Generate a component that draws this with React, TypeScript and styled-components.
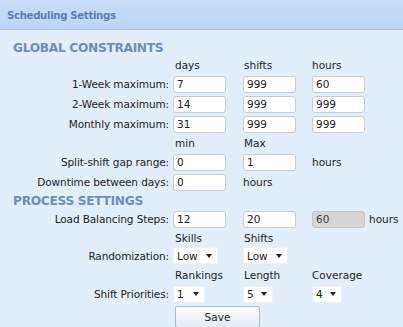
import React from "react";
import styled, { createGlobalStyle } from "styled-components";

const GlobalStyle = createGlobalStyle`
  html, body {
    margin: 0;
    padding: 0;
    background: #e3eefb;
  }
  body {
    font-family: "DejaVu Sans", Verdana, sans-serif;
    font-size: 10.5px;
    color: #222;
  }
`;

const Panel = styled.div`
  width: 403px;
  height: 327px;
  overflow: hidden;
  background: #e3eefb;
`;

const Header = styled.div`
  height: 30px;
  display: flex;
  align-items: center;
  padding-left: 7px;
  padding-top: 1px;
  box-sizing: border-box;
  background: linear-gradient(#c7ddf8, #bdd6f6);
  border-bottom: 1px solid #a9c3e6;
`;

const Title = styled.div`
  font-family: "DejaVu Sans", Verdana, sans-serif;
  font-weight: bold;
  font-size: 10.2px;
  letter-spacing: -0.35px;
  color: #5a7eb6;
`;

const Body = styled.div`
  padding-top: 9px;
`;

const SectionTitle = styled.div<{ h: number }>`
  height: ${(p) => p.h}px;
  display: flex;
  align-items: center;
  padding-left: 13px;
  font-weight: bold;
  font-size: 12.2px;
  letter-spacing: -0.3px;
  color: #6a8dc3;
`;

const Row = styled.div<{ h: number }>`
  height: ${(p) => p.h}px;
  display: grid;
  grid-template-columns: 173px 70px 69px auto;
  align-items: center;
`;

const Label = styled.div`
  text-align: right;
  padding-right: 4px;
  white-space: nowrap;
  letter-spacing: -0.1px;
`;

const Cell = styled.div<{ pad?: number }>`
  padding-left: ${(p) => p.pad ?? 0}px;
  white-space: nowrap;
  display: flex;
  align-items: center;
  gap: 4px;
`;

const Input = styled.div<{ disabled?: boolean }>`
  box-sizing: border-box;
  width: 53px;
  height: 17px;
  line-height: 15px;
  padding-left: 3px;
  border: 1px solid ${(p) => (p.disabled ? "#c4c4c4" : "#c9cdd3")};
  border-radius: 3px;
  background: ${(p) => (p.disabled ? "#d6d6d6" : "#ffffff")};
  color: ${(p) => (p.disabled ? "#444" : "#222")};
`;

const Select = styled.div<{ w: number }>`
  box-sizing: border-box;
  width: ${(p) => p.w}px;
  height: 17px;
  display: flex;
  align-items: center;
  justify-content: space-between;
  padding: 0 5px 0 3px;
  background: #ffffff;
  border: 1px solid #eef2f7;
`;

const Caret = styled.span`
  width: 0;
  height: 0;
  border-left: 3.5px solid transparent;
  border-right: 3.5px solid transparent;
  border-top: 4px solid #222;
`;

const SaveRow = styled.div`
  padding-left: 175px;
  padding-top: 2px;
`;

const SaveButton = styled.button`
  box-sizing: border-box;
  width: 85px;
  height: 22px;
  font-family: "DejaVu Sans", Verdana, sans-serif;
  font-size: 10.5px;
  color: #222;
  background: linear-gradient(#fbfcfe, #e4ebf3);
  border: 1px solid #a9b9cd;
  border-radius: 2px;
  padding: 0;
`;

const Dropdown = ({ value, w }: { value: string; w: number }) => (
  <Select w={w}>
    <span>{value}</span>
    <Caret />
  </Select>
);

const App: React.FC = () => {
  const maxRows = [
    { label: "1-Week maximum:", values: ["7", "999", "60"] },
    { label: "2-Week maximum:", values: ["14", "999", "999"] },
    { label: "Monthly maximum:", values: ["31", "999", "999"] },
  ];

  return (
    <Panel>
      <GlobalStyle />
      <Header>
        <Title>Scheduling Settings</Title>
      </Header>
      <Body>
        <SectionTitle h={17}>GLOBAL CONSTRAINTS</SectionTitle>
        <Row h={18}>
          <span />
          <Cell pad={2}>days</Cell>
          <Cell pad={1}>shifts</Cell>
          <Cell>hours</Cell>
        </Row>
        {maxRows.map((r) => (
          <Row h={20} key={r.label}>
            <Label>{r.label}</Label>
            {r.values.map((v, i) => (
              <Cell key={i}>
                <Input>{v}</Input>
              </Cell>
            ))}
          </Row>
        ))}
        <Row h={18}>
          <span />
          <Cell pad={2}>min</Cell>
          <Cell pad={1}>Max</Cell>
          <span />
        </Row>
        <Row h={20}>
          <Label>Split-shift gap range:</Label>
          <Cell>
            <Input>0</Input>
          </Cell>
          <Cell>
            <Input>1</Input>
          </Cell>
          <Cell>hours</Cell>
        </Row>
        <Row h={20}>
          <Label>Downtime between days:</Label>
          <Cell>
            <Input>0</Input>
          </Cell>
          <Cell>hours</Cell>
          <span />
        </Row>
        <SectionTitle h={17}>PROCESS SETTINGS</SectionTitle>
        <Row h={20}>
          <Label>Load Balancing Steps:</Label>
          <Cell>
            <Input>12</Input>
          </Cell>
          <Cell>
            <Input>20</Input>
          </Cell>
          <Cell>
            <Input disabled>60</Input>
            hours
          </Cell>
        </Row>
        <Row h={17}>
          <span />
          <Cell pad={2}>Skills</Cell>
          <Cell pad={1}>Shifts</Cell>
          <span />
        </Row>
        <Row h={19}>
          <Label>Randomization:</Label>
          <Cell>
            <Dropdown value="Low" w={45} />
          </Cell>
          <Cell>
            <Dropdown value="Low" w={45} />
          </Cell>
          <span />
        </Row>
        <Row h={19}>
          <span />
          <Cell pad={2}>Rankings</Cell>
          <Cell pad={1}>Length</Cell>
          <Cell>Coverage</Cell>
        </Row>
        <Row h={20}>
          <Label>Shift Priorities:</Label>
          <Cell>
            <Dropdown value="1" w={32} />
          </Cell>
          <Cell>
            <Dropdown value="5" w={30} />
          </Cell>
          <Cell>
            <Dropdown value="4" w={30} />
          </Cell>
        </Row>
        <SaveRow>
          <SaveButton>Save</SaveButton>
        </SaveRow>
      </Body>
    </Panel>
  );
};

export default App;
